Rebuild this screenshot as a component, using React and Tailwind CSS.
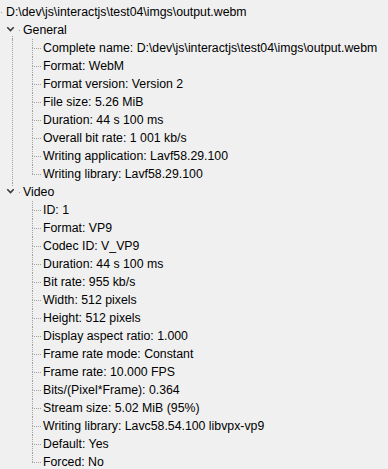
import React from "react";

const general = [
  "Complete name: D:\\dev\\js\\interactjs\\test04\\imgs\\output.webm",
  "Format: WebM",
  "Format version: Version 2",
  "File size: 5.26 MiB",
  "Duration: 44 s 100 ms",
  "Overall bit rate: 1 001 kb/s",
  "Writing application: Lavf58.29.100",
  "Writing library: Lavf58.29.100",
];

const video = [
  "ID: 1",
  "Format: VP9",
  "Codec ID: V_VP9",
  "Duration: 44 s 100 ms",
  "Bit rate: 955 kb/s",
  "Width: 512 pixels",
  "Height: 512 pixels",
  "Display aspect ratio: 1.000",
  "Frame rate mode: Constant",
  "Frame rate: 10.000 FPS",
  "Bits/(Pixel*Frame): 0.364",
  "Stream size: 5.02 MiB (95%)",
  "Writing library: Lavc58.54.100 libvpx-vp9",
  "Default: Yes",
  "Forced: No",
];

function Leaf({ text, last }) {
  return (
    <div className="flex h-[18px]">
      <div className="ml-[19px] flex w-[9px] shrink-0 flex-col">
        <div className="h-[9px] border-l border-dotted border-[#a0a0a0]" />
        <div
          className={
            last
              ? "h-[9px] border-t border-dotted border-[#a0a0a0]"
              : "h-[9px] border-l border-t border-dotted border-[#a0a0a0]"
          }
        />
      </div>
      <span className="ml-[2px] self-center whitespace-nowrap">{text}</span>
    </div>
  );
}

function Group({ title, items, hasNext, hasPrev }) {
  return (
    <div>
      <div className="flex h-[18px] items-center">
        <svg width="22" height="18" className="shrink-0" viewBox="0 0 22 18">
          {hasPrev && (
            <g fill="#a0a0a0">
              <rect x="12" y="0" width="1" height="1" />
              <rect x="12" y="2" width="1" height="1" />
            </g>
          )}
          <path
            d="M7.3 6.3 L10.5 9.5 L13.7 6.3"
            fill="none"
            stroke="#3a3a3a"
            strokeWidth="1.6"
          />
          <rect x="19" y="9" width="1" height="1" fill="#a0a0a0" />
          {hasNext && (
            <g fill="#a0a0a0">
              <rect x="12" y="15" width="1" height="1" />
              <rect x="12" y="17" width="1" height="1" />
            </g>
          )}
        </svg>
        <span className="ml-[1px] whitespace-nowrap">{title}</span>
      </div>
      <div
        className={
          hasNext
            ? "ml-[12px] border-l border-dotted border-[#a0a0a0]"
            : "ml-[12px] border-l border-transparent"
        }
      >
        {items.map((t, i) => (
          <Leaf key={i} text={t} last={i === items.length - 1} />
        ))}
      </div>
    </div>
  );
}

export default function App() {
  return (
    <div
      className="h-[469px] w-[388px] overflow-hidden bg-[#f0f0f0] pt-[3px] text-[12.3px] leading-none text-black"
      style={{ fontFamily: '"Liberation Sans", Arial, sans-serif' }}
    >
      <div className="flex h-[18px] items-center">
        <span className="ml-[1px] h-px w-px shrink-0 bg-[#a0a0a0]" />
        <span className="ml-[4px] whitespace-nowrap">
          D:\dev\js\interactjs\test04\imgs\output.webm
        </span>
      </div>
      <Group title="General" items={general} hasNext hasPrev={false} />
      <Group title="Video" items={video} hasNext={false} hasPrev />
    </div>
  );
}
